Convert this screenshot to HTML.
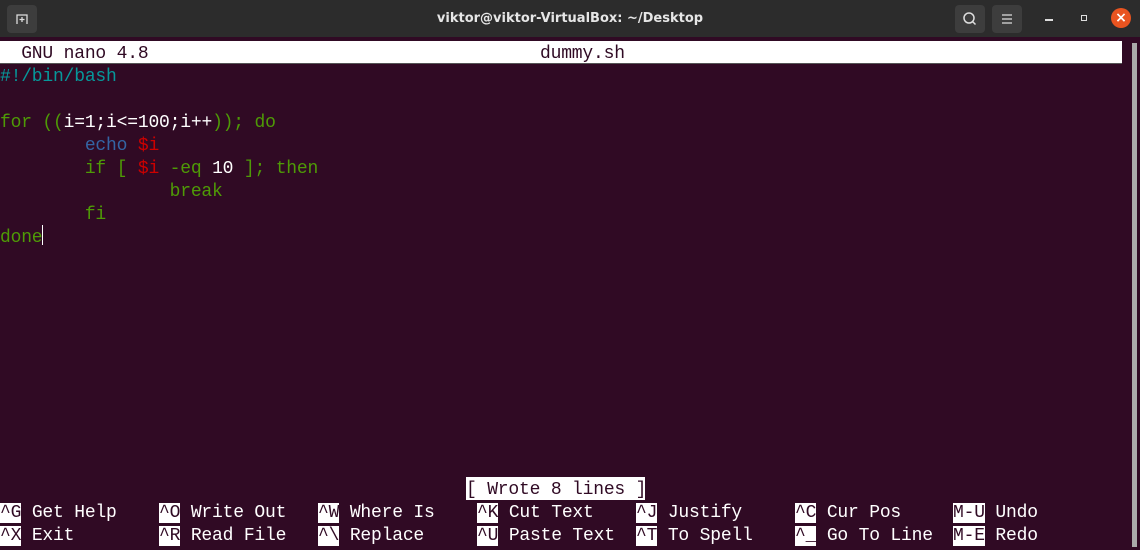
<!DOCTYPE html>
<html><head><meta charset="utf-8"><style>
*{margin:0;padding:0;box-sizing:border-box}
body{width:1140px;height:547px;background:#300a24;overflow:hidden;position:relative;font-family:"Liberation Mono",monospace}
#tb{position:absolute;left:0;top:0;width:1140px;height:37px;background:#2c2c2c}
.btn{position:absolute;top:5px;width:30px;height:28px;background:#3d3d3d;border-radius:4px}
#title{position:absolute;top:0;left:0;width:1140px;text-align:center;color:#e6e6e6;font:bold 13px "DejaVu Sans","Liberation Sans",sans-serif;line-height:37px}
.r{position:absolute;left:0;height:23px;line-height:27px;font-size:18px;letter-spacing:-0.2px;white-space:pre;color:#fff}
.g{color:#4e9a06}.t{color:#06989a}.b{color:#3465a4}.rd{color:#cc0000}
.k{background:#fff;color:#300a24}
</style></head><body>
<div id="tb"></div>
<div class="btn" style="left:7px"><svg width="30" height="28"><path d="M10 19V10h10v9M15 12v5M12.5 14.5h5" stroke="#ddd" stroke-width="1.3" fill="none"/></svg></div>
<div id="title">viktor@viktor-VirtualBox: ~/Desktop</div>
<div class="btn" style="left:955px"><svg width="30" height="28"><circle cx="14" cy="13" r="5" stroke="#ddd" stroke-width="1.5" fill="none"/><path d="M17.5 16.5l3 3" stroke="#ddd" stroke-width="1.5"/></svg></div>
<div class="btn" style="left:992px"><svg width="30" height="28"><path d="M10 10h10M10 14h10M10 18h10" stroke="#ddd" stroke-width="1.3"/></svg></div>
<div style="position:absolute;left:1045px;top:19px;width:8px;height:1.5px;background:#ddd"></div>
<div style="position:absolute;left:1081px;top:15px;width:6px;height:6px;border:1.3px solid #ddd"></div>
<div style="position:absolute;left:1111px;top:8px;width:20px;height:20px;border-radius:50%;background:#e95420;color:#fff;font:bold 14px 'DejaVu Sans',sans-serif;text-align:center;line-height:20px">×</div>
<div style="position:absolute;left:0;top:41px;width:1122px;height:23px;background:#fff;border-bottom:1px solid #555"></div>
<div style="position:absolute;left:1132px;top:43px;width:5px;height:504px;background:#aaa"></div>
<div class="r" style="top:41px;color:#300a24">  GNU nano 4.8</div>
<div class="r" style="top:41px;left:540px;color:#300a24">dummy.sh</div>
<div class="r t" style="top:64px">#!/bin/bash</div>
<div class="r" style="top:110px"><span class="g">for ((</span>i=1;i&lt;=100;i++<span class="g">)); do</span></div>
<div class="r" style="top:133px">        <span class="b">echo</span> <span class="rd">$i</span></div>
<div class="r" style="top:156px">        <span class="g">if [ </span><span class="rd">$i</span><span class="g"> -eq </span>10<span class="g"> ]; then</span></div>
<div class="r g" style="top:179px">                break</div>
<div class="r g" style="top:202px">        fi</div>
<div class="r g" style="top:225px">done<span style="display:inline-block;width:1px;height:20px;background:#fff;vertical-align:-3px"></span></div>
<div style="position:absolute;top:477px;left:466px;width:179px;height:23px;background:#fff"></div>
<div class="r" style="top:477px;left:466px;color:#300a24">[ Wrote 8 lines ]</div>
<div class="r" style="top:500px;left:0"><span class="k">^G</span> Get Help</div>
<div class="r" style="top:500px;left:159px"><span class="k">^O</span> Write Out</div>
<div class="r" style="top:500px;left:318px"><span class="k">^W</span> Where Is</div>
<div class="r" style="top:500px;left:477px"><span class="k">^K</span> Cut Text</div>
<div class="r" style="top:500px;left:636px"><span class="k">^J</span> Justify</div>
<div class="r" style="top:500px;left:795px"><span class="k">^C</span> Cur Pos</div>
<div class="r" style="top:500px;left:953px"><span class="k">M-U</span> Undo</div>
<div class="r" style="top:523px;left:0"><span class="k">^X</span> Exit</div>
<div class="r" style="top:523px;left:159px"><span class="k">^R</span> Read File</div>
<div class="r" style="top:523px;left:318px"><span class="k">^\</span> Replace</div>
<div class="r" style="top:523px;left:477px"><span class="k">^U</span> Paste Text</div>
<div class="r" style="top:523px;left:636px"><span class="k">^T</span> To Spell</div>
<div class="r" style="top:523px;left:795px"><span class="k">^_</span> Go To Line</div>
<div class="r" style="top:523px;left:953px"><span class="k">M-E</span> Redo</div>
</body></html>
